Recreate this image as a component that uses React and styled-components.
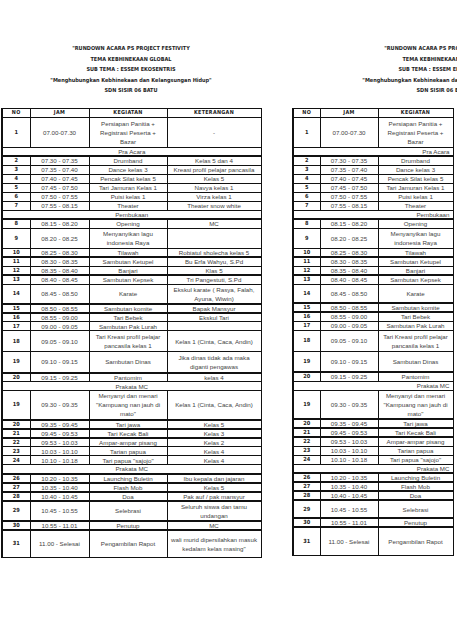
import React from 'react'
import styled, { createGlobalStyle } from 'styled-components'

const Global = createGlobalStyle`
  html, body {
    margin: 0;
    padding: 0;
    background: #fff;
  }
  body {
    width: 474px;
    height: 632px;
    overflow: hidden;
    font-family: "Liberation Sans", Arial, sans-serif;
  }
`

const rows = [
  { no: '1', jam: '07.00-07.30', keg: ['Persiapan Panitia +', 'Registrasi Peserta +', 'Bazar'], ket: ['-'], h: 30 },
  { section: 'Pra Acara' },
  { no: '2', jam: '07.30 - 07.35', keg: ['Drumband'], ket: ['Kelas 5 dan 4'], thick: true },
  { no: '3', jam: '07.35 - 07.40', keg: ['Dance kelas 3'], ket: ['Kreasi profil pelajar pancasila'] },
  { no: '4', jam: '07.40 - 07.45', keg: ['Pencak Silat kelas 5'], ket: ['Kelas 5'] },
  { no: '5', jam: '07.45 - 07.50', keg: ['Tari Jamuran Kelas 1'], ket: ['Navya kelas 1'] },
  { no: '6', jam: '07.50 - 07.55', keg: ['Puisi kelas 1'], ket: ['Virza kelas 1'] },
  { no: '7', jam: '07.55 - 08.15', keg: ['Theater'], ket: ['Theater snow white'] },
  { section: 'Pembukaan' },
  { no: '8', jam: '08.15 - 08.20', keg: ['Opening'], ket: ['MC'], thick: true },
  { no: '9', jam: '08.20 - 08.25', keg: ['Menyanyikan lagu', 'indonesia Raya'], ket: [''], h: 20 },
  { no: '10', jam: '08.25 - 08.30', keg: ['Tilawah'], ket: ['Robiatul sholecha kelas 5'] },
  { no: '11', jam: '08.30 - 08.35', keg: ['Sambutan Ketupel'], ket: ['Bu Erfa Wahyu, S.Pd'], thick: true },
  { no: '12', jam: '08.35 - 08.40', keg: ['Banjari'], ket: ['Klas 5'] },
  { no: '13', jam: '08.40 - 08.45', keg: ['Sambutan Kepsek'], ket: ['Tri Pangestuti, S.Pd'], thick: true },
  { no: '14', jam: '08.45 - 08.50', keg: ['Karate'], ket: ['Ekskul karate ( Rasya, Falah,', 'Ayuna, Wiwin)'], h: 19 },
  { no: '15', jam: '08.50 - 08.55', keg: ['Sambutan komite'], ket: ['Bapak Mansyur'], thick: true },
  { no: '16', jam: '08.55 - 09.00', keg: ['Tari Bebek'], ket: ['Ekskul Tari'], thick: true },
  { no: '17', jam: '09.00 - 09.05', keg: ['Sambutan Pak Lurah'], ket: [''] },
  { no: '18', jam: '09.05 - 09.10', keg: ['Tari Kreasi profil pelajar', 'pancasila kelas 1'], ket: ['Kelas 1 (Cinta, Caca, Andin)'], h: 21 },
  { no: '19', jam: '09.10 - 09.15', keg: ['Sambutan Dinas'], ket: ['Jika dinas tidak ada maka', 'diganti pengawas'], h: 21 },
  { no: '20', jam: '09.15 - 09.25', keg: ['Pantomim'], ket: ['kelas 4'], thick: true },
  { section: 'Prakata MC' },
  { no: '19', jam: '09.30 - 09.35', keg: ['Menyanyi dan menari', '"Kampuang nan jauh di', 'mato"'], ket: ['Kelas 1 (Cinta, Caca, Andin)'], h: 29 },
  { no: '20', jam: '09.35 - 09.45', keg: ['Tari jawa'], ket: ['Kelas 5'], thick: true },
  { no: '21', jam: '09.45 - 09.53', keg: ['Tari Kecak Bali'], ket: ['Kelas 3'], thick: true },
  { no: '22', jam: '09.53 - 10.03', keg: ['Ampar-ampar pisang'], ket: ['Kelas 2'], thick: true },
  { no: '23', jam: '10.03 - 10.10', keg: ['Tarian papua'], ket: ['Kelas 4'] },
  { no: '24', jam: '10.10 - 10.18', keg: ['Tari papua "sajojo"'], ket: ['Kelas 4'] },
  { section: 'Prakata MC' },
  { no: '26', jam: '10.20 - 10.35', keg: ['Launching Buletin'], ket: ['Ibu kepala dan jajaran'], thick: true },
  { no: '27', jam: '10.35 - 10.40', keg: ['Flash Mob'], ket: ['Kelas 5'], thick: true },
  { no: '28', jam: '10.40 - 10.45', keg: ['Doa'], ket: ['Pak auf / pak mansyur'], thick: true },
  { no: '29', jam: '10.45 - 10.55', keg: ['Selebrasi'], ket: ['Seluruh siswa dan tamu', 'undangan'], h: 18, thick: true },
  { no: '30', jam: '10.55 - 11.01', keg: ['Penutup'], ket: ['MC'], h: 9, thick: true },
  { no: '31', jam: '11.00 - Selesai', keg: ['Pengambilan Rapot'], ket: ['wali murid dipersilahkan masuk', 'kedalam kelas masing"'], h: 28, thick: true },
]

const titleLines = [
  '"RUNDOWN ACARA PS PROJECT FESTIVITY',
  'TEMA KEBHINEKAAN GLOBAL',
  'SUB TEMA : ESSEM EKOSENTRIS',
  '"Menghubungkan Kebhinekaan dan Kelangsungan Hidup"',
  'SDN SISIR 06 BATU',
]

const Page = styled.div`
  display: flex;
  align-items: flex-start;
  width: 474px;
`

const LeftSheet = styled.div`
  width: 262px;
  padding-top: 43px;
`

const RightSheet = styled.div`
  width: 170px;
  margin-left: 25px;
  padding-top: 43px;
  overflow: hidden;
`

const Title = styled.div`
  width: ${p => p.$width}px;
  margin-left: ${p => p.$shift}px;
  text-align: center;
  font-family: "DejaVu Sans Condensed", "Liberation Sans", sans-serif;
  font-weight: bold;
  font-size: 5.5px;
  line-height: 10.5px;
  color: #1e1e1e;
  white-space: nowrap;
`

const Sheet = styled.table`
  margin-top: 12px;
  margin-left: ${p => p.$shift}px;
  border-collapse: collapse;
  table-layout: fixed;
  width: ${p => p.$width}px;
  border-left: 2px solid #111;
`

const HeadCell = styled.th`
  height: 8px;
  padding: 0;
  border: 1px solid #111;
  font-family: "DejaVu Sans Condensed", "Liberation Sans", sans-serif;
  font-weight: bold;
  font-size: 5.4px;
  line-height: 7px;
  letter-spacing: 0.3px;
  color: #222;
  text-align: center;
  vertical-align: middle;
`

const Row = styled.tr`
  height: ${p => p.$h}px;
  border-top: ${p => (p.$thick ? '2px' : '1px')} solid #111;
`

const Cell = styled.td`
  padding: 0;
  border-left: 1px solid #111;
  border-right: 1px solid #111;
  border-bottom: 1px solid #111;
  font-size: 6.2px;
  line-height: ${p => (p.$lh ? p.$lh : 7)}px;
  color: #444;
  text-align: center;
  vertical-align: middle;
  white-space: nowrap;
  overflow: hidden;
`

const NoCell = styled(Cell)`
  font-family: "DejaVu Sans Condensed", "Liberation Sans", sans-serif;
  font-weight: bold;
  font-size: 5.6px;
  color: #222;
  border-right-width: 1.5px;
`

const SectionCell = styled.td`
  padding: 0 ${p => (p.$align === 'right' ? '3px' : '0')} 0 0;
  border-right: 1px solid #111;
  border-bottom: 1px solid #111;
  font-size: 6.2px;
  line-height: 7px;
  color: #444;
  text-align: ${p => p.$align};
  vertical-align: middle;
  white-space: nowrap;
`

const Lines = ({ items }) =>
  items.map((t, i) => (
    <React.Fragment key={i}>
      {i > 0 && <br />}
      {t}
    </React.Fragment>
  ))

const lineStep = items => (items.length > 1 ? 9 : 7)

const Rundown = ({ widths, full, shift, align }) => {
  const total = widths.reduce((a, b) => a + b, 0)
  return (
    <Sheet $width={total} $shift={shift}>
      <colgroup>
        {widths.map((w, i) => (
          <col key={i} style={{ width: w }} />
        ))}
      </colgroup>
      <thead>
        <tr>
          <HeadCell>NO</HeadCell>
          <HeadCell>JAM</HeadCell>
          <HeadCell>KEGIATAN</HeadCell>
          {full && <HeadCell>KETERANGAN</HeadCell>}
        </tr>
      </thead>
      <tbody>
        {rows.map((r, i) =>
          r.section ? (
            <Row key={i} $h={9}>
              <SectionCell colSpan={full ? 4 : 3} $align={align}>
                {r.section}
              </SectionCell>
            </Row>
          ) : (
            <Row key={i} $h={r.h || 9} $thick={r.thick}>
              <NoCell>{r.no}</NoCell>
              <Cell>{r.jam}</Cell>
              <Cell $lh={lineStep(r.keg)}>
                <Lines items={r.keg} />
              </Cell>
              {full && (
                <Cell $lh={lineStep(r.ket)}>
                  <Lines items={r.ket} />
                </Cell>
              )}
            </Row>
          )
        )}
      </tbody>
    </Sheet>
  )
}

const App = () => {
  return (
    <>
      <Global />
      <Page>
        <LeftSheet>
          <Title $width={262} $shift={0}>
            {titleLines.map(t => (
              <div key={t}>{t}</div>
            ))}
          </Title>
          <Rundown widths={[28, 59, 78, 94]} full shift={1} align="center" />
        </LeftSheet>
        <RightSheet>
          <Title $width={300} $shift={6}>
            {titleLines.map(t => (
              <div key={t}>{t}</div>
            ))}
          </Title>
          <Rundown widths={[27, 58, 75]} shift={5} align="right" />
        </RightSheet>
      </Page>
    </>
  )
}

export default App
